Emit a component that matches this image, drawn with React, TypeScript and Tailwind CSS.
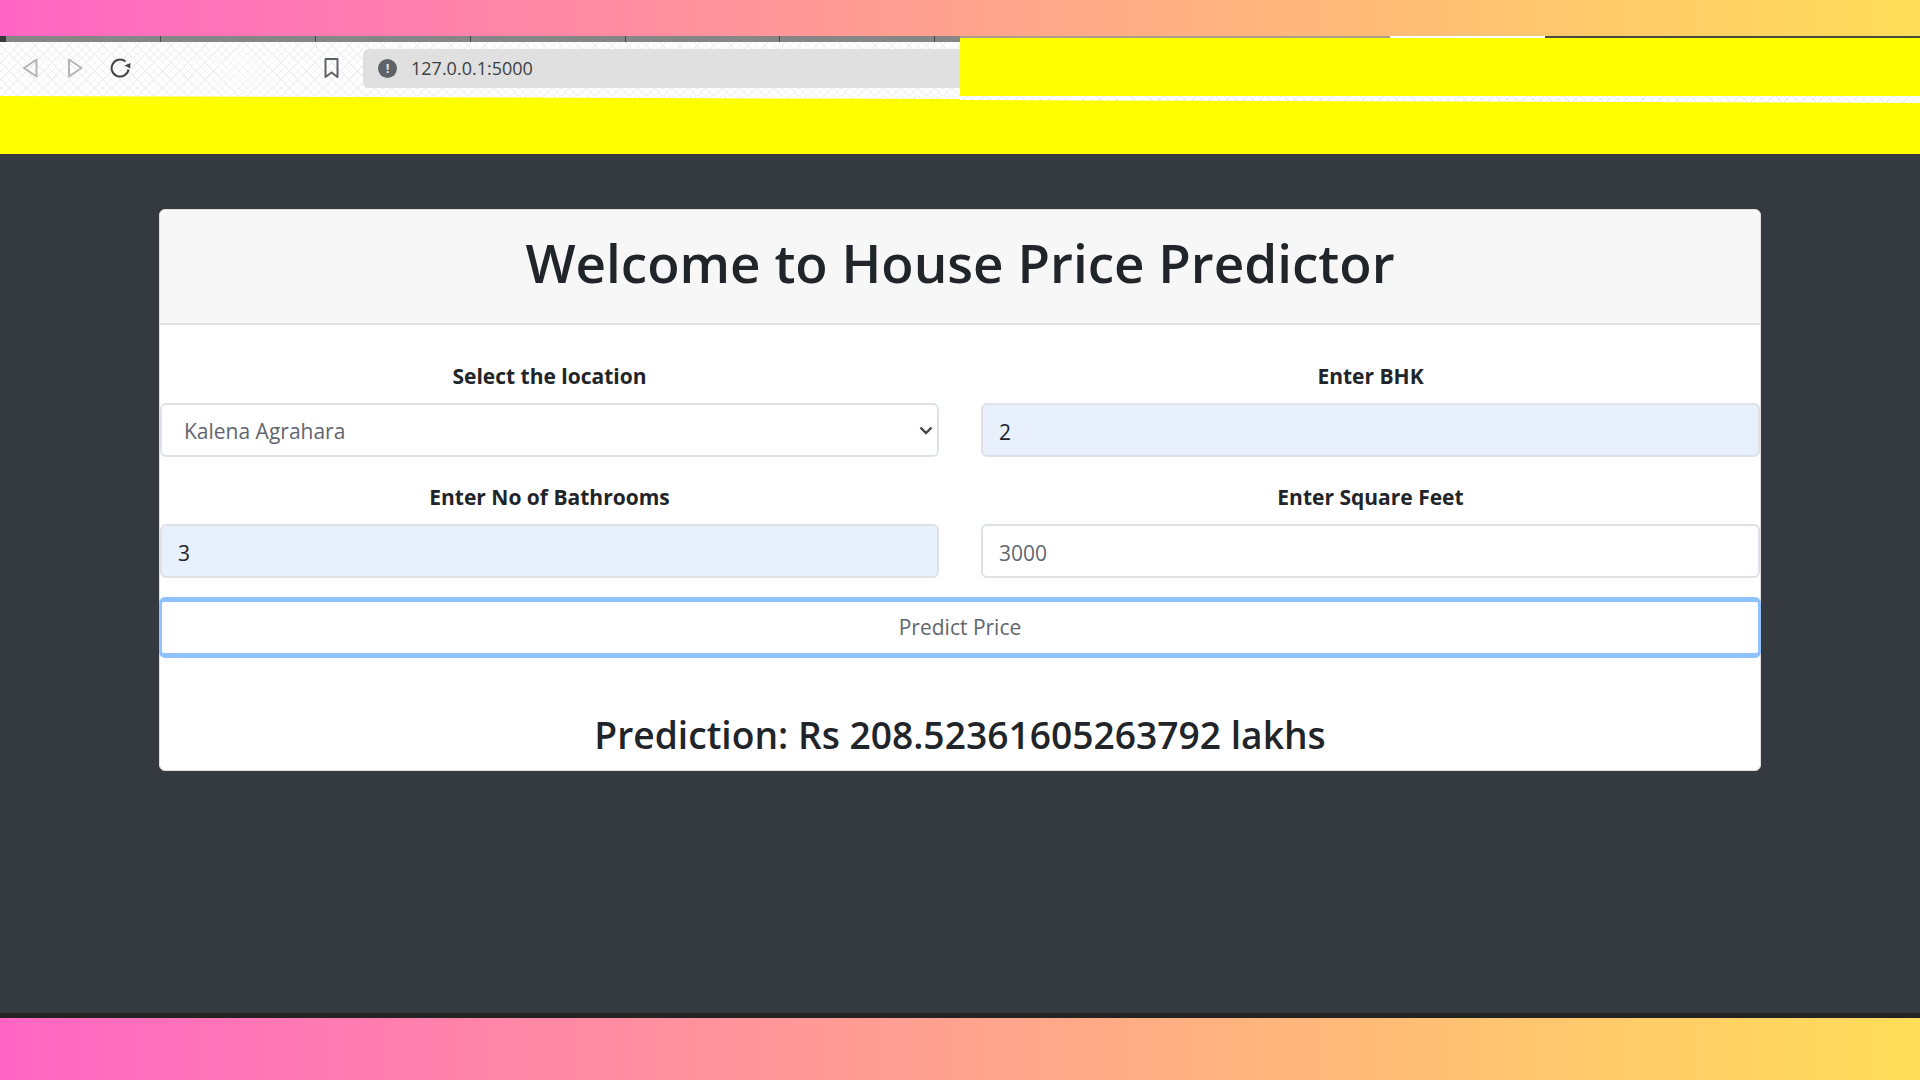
import type { ReactNode } from "react"

const gradient = "bg-[linear-gradient(90deg,#ff66c4,#ffde59)]"
const font = "font-['Open_Sans','Noto_Sans',sans-serif]"
const weave =
  "bg-white bg-[repeating-linear-gradient(45deg,#f1f1f1_0,#f1f1f1_1px,transparent_1px,transparent_6px),repeating-linear-gradient(-45deg,#f1f1f1_0,#f1f1f1_1px,transparent_1px,transparent_6px)]"

function Field({ label, children }: { label: string; children: ReactNode }) {
  return (
    <div className="flex flex-col items-stretch gap-3">
      <label className="h-[29px] text-center text-[21px] leading-[29px] font-bold text-[#212529]">
        {label}
      </label>
      {children}
    </div>
  )
}

function TextInput({ value, filled }: { value: string; filled?: boolean }) {
  return (
    <input
      readOnly
      value={value}
      className={`h-[54px] w-full rounded-md border-2 border-[#dee2e6] px-4 pt-[3px] text-[21px] outline-none ${
        filled ? "bg-[#e8f0fe] text-[#212529]" : "bg-white text-[#5f666d]"
      }`}
    />
  )
}

function BrowserBar() {
  return (
    <div className={`flex h-[60px] ${weave}`}>
      <div className="flex w-[960px] flex-col">
        <div className="flex h-[6px] bg-[#868686]">
          <div className="h-full w-[6px] bg-[#3a3a3a]" />
          <div className="h-full w-[155px] border-r border-[#444]" />
          <div className="h-full w-[155px] border-r border-[#444]" />
          <div className="h-full w-[155px] border-r border-[#444]" />
          <div className="h-full w-[155px] border-r border-[#444]" />
          <div className="h-full w-[154px] border-r border-[#444]" />
          <div className="h-full w-[155px] border-r border-[#444]" />
        </div>
        <div className="flex h-[54px] items-center pb-[2px]">
          <svg width="360" height="24" viewBox="0 0 360 24" className="shrink-0">
            <path d="M36.5 3.5 24 12l12.5 8.5z" fill="none" stroke="#b5b5b5" strokeWidth="2" strokeLinejoin="round" />
            <path d="M69 3.5 81.5 12 69 20.5z" fill="none" stroke="#b5b5b5" strokeWidth="2" strokeLinejoin="round" />
            <path d="M128.5 13.5A8.5 8.5 0 1 1 125.5 5.5" fill="none" stroke="#444" strokeWidth="2" />
            <path d="M124.5 9.5 130.5 7l-.3 5.5z" fill="#444" />
            <path d="M325.5 3h12v18l-6-4.5-6 4.5z" fill="none" stroke="#5f6368" strokeWidth="2" strokeLinejoin="round" />
          </svg>
          <div className="ml-[3px] flex h-[39px] flex-1 items-center rounded-l-md bg-[#e0e0e0] pl-[15px]">
            <div className="flex h-[19px] w-[19px] items-center justify-center rounded-full bg-[#5f6368] text-[13px] leading-none font-bold text-[#e0e0e0]">
              !
            </div>
            <span className="ml-[14px] text-[18px] text-[#3c4043]">127.0.0.1:5000</span>
          </div>
        </div>
      </div>
      <div className="flex w-[960px] flex-col">
        <div className="flex h-[2px]">
          <div className="w-[430px] bg-[#a8a08a]" />
          <div className="w-[155px] bg-white" />
          <div className="flex-1 bg-[#4a4a3a]" />
        </div>
        <div className="flex-1 bg-[#ffff00]" />
      </div>
    </div>
  )
}

export default function App() {
  return (
    <div className={`flex h-[1080px] w-[1920px] flex-col overflow-hidden bg-[#343a40] ${font}`}>
      <div className={`h-9 shrink-0 ${gradient}`} />
      <BrowserBar />
      <div className={`flex h-[58px] shrink-0 ${weave}`}>
        <div className="w-[960px] bg-[#ffff00] [clip-path:polygon(0_0,100%_3px,100%_100%,0_100%)]" />
        <div className="mt-1 w-[960px] bg-[#ffff00] [clip-path:polygon(0_0,100%_3px,100%_100%,0_100%)]" />
      </div>

      <main className="flex-1 pt-[55px]">
        <div className="mx-auto w-[1602px] rounded-md border border-[#dfdfdf] bg-white">
          <div className="flex h-[115px] items-center justify-center rounded-t-md border-b-2 border-[#e0e0e0] bg-[#f7f7f7] pb-2">
            <h1 className="text-[53px] font-semibold text-[#212529]">Welcome to House Price Predictor</h1>
          </div>
          <div className="pt-[37px]">
            <div className="grid grid-cols-2 gap-x-[42px] gap-y-[26px]">
              <Field label="Select the location">
                <div className="relative">
                  <select
                    defaultValue="Kalena Agrahara"
                    className="h-[54px] w-full appearance-none rounded-md border-2 border-[#dee2e6] bg-white pt-[3px] pl-[22px] text-[21px] text-[#5f666d] outline-none"
                  >
                    <option>Kalena Agrahara</option>
                  </select>
                  <svg width="14" height="9" viewBox="0 0 14 9" className="absolute top-[23px] right-[6px]">
                    <path d="M1.5 1.5 7 7l5.5-5.5" fill="none" stroke="#444" strokeWidth="2.4" />
                  </svg>
                </div>
              </Field>
              <Field label="Enter BHK">
                <TextInput value="2" filled />
              </Field>
              <Field label="Enter No of Bathrooms">
                <TextInput value="3" filled />
              </Field>
              <Field label="Enter Square Feet">
                <TextInput value="3000" />
              </Field>
            </div>
            <button className="mt-[19px] -mx-px flex h-[61px] w-[calc(100%+2px)] items-center justify-center rounded-md border-x-[3px] border-y-[5px] border-[#90c2ff] bg-white text-[21px] text-[#5f666d]">
              Predict Price
            </button>
            <h3 className="mt-[50px] pb-[9px] text-center text-[37.2px] leading-[53px] font-semibold text-[#212529]">
              Prediction: Rs 208.52361605263792 lakhs
            </h3>
          </div>
        </div>
      </main>

      <div className="h-[5px] shrink-0 bg-[#232323]" />
      <div className={`h-[62px] shrink-0 ${gradient}`} />
    </div>
  )
}
